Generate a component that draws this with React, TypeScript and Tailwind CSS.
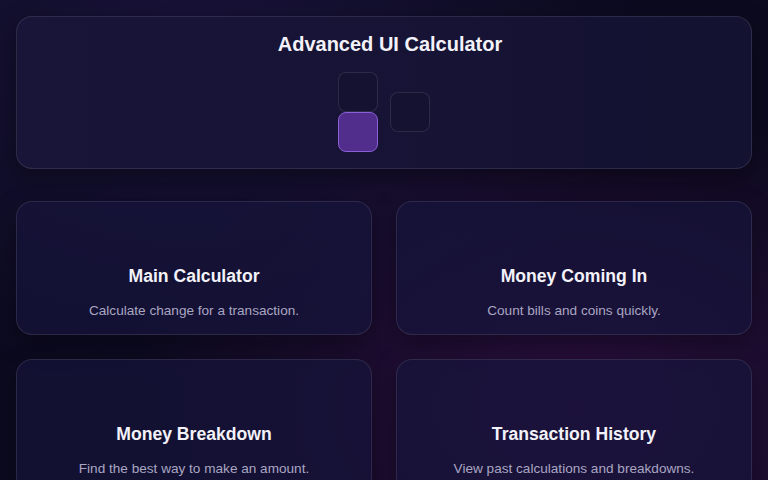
import React from "react";

const tools = [
  { title: "Main Calculator", text: "Calculate change for a transaction." },
  { title: "Money Coming In", text: "Count bills and coins quickly." },
  { title: "Money Breakdown", text: "Find the best way to make an amount." },
  { title: "Transaction History", text: "View past calculations and breakdowns." },
];

function ToolCard({ title, text }: { title: string; text: string }) {
  return (
    <div className="flex h-[134px] flex-col items-center rounded-2xl border border-white/10 bg-[#16143a]/70 px-6 pt-[60px] text-center shadow-[0_8px_24px_rgba(0,0,0,0.35)]">
      <h2 className="text-[17.6px] leading-7 font-bold text-[#f3f2fa]">{title}</h2>
      <p className="mt-[11px] text-[13.6px] leading-5 text-[#a9a6c2]">{text}</p>
    </div>
  );
}

export default function App() {
  return (
    <div className="h-[480px] overflow-hidden bg-[#0c0a1f] bg-[radial-gradient(ellipse_at_75%_85%,rgba(70,20,90,0.55),transparent_55%),radial-gradient(ellipse_at_25%_10%,rgba(40,30,90,0.45),transparent_55%)] p-4 font-['Liberation_Sans',Arial,sans-serif]">
      <header className="flex flex-col items-center rounded-2xl border border-white/10 bg-[linear-gradient(90deg,#191538,#161335_60%,#131230)] pt-[13px] pb-4 shadow-[0_8px_24px_rgba(0,0,0,0.4)]">
        <h1 className="ml-3 text-xl leading-7 font-bold text-[#f3f2fa]">Advanced UI Calculator</h1>
        <div className="mt-[14px] flex items-center gap-3">
          <div className="flex flex-col">
            <div className="h-10 w-10 rounded-lg border border-white/10 bg-[#141230]" />
            <div className="h-10 w-10 rounded-lg border border-[#8a5fd8] bg-[#512d8c]" />
          </div>
          <div className="h-10 w-10 rounded-lg border border-white/10 bg-[#141230]" />
        </div>
      </header>

      <main className="mt-8 grid grid-cols-2 gap-6">
        {tools.map((t) => (
          <ToolCard key={t.title} title={t.title} text={t.text} />
        ))}
      </main>
    </div>
  );
}
